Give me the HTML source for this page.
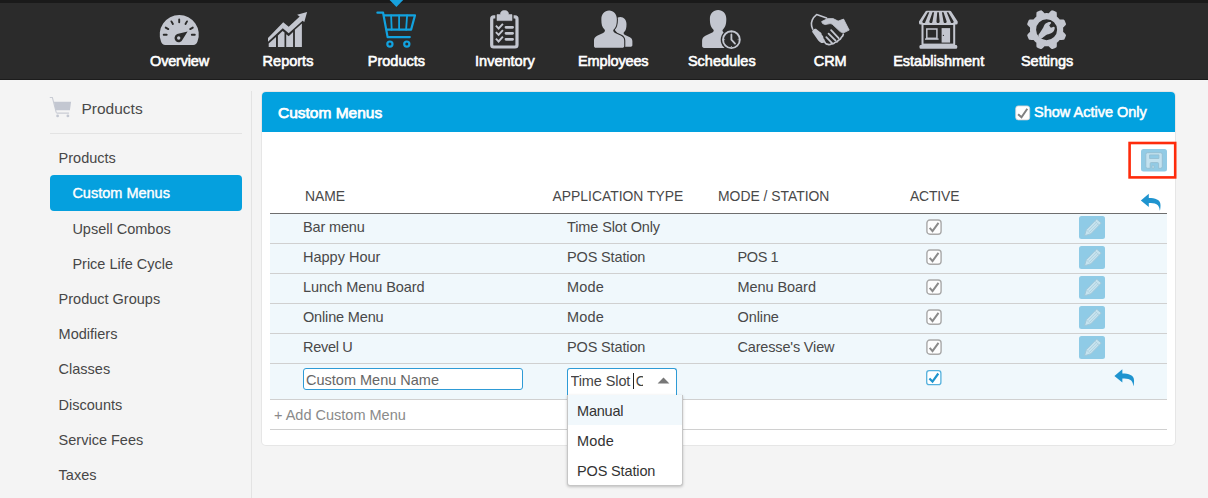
<!DOCTYPE html>
<html><head><meta charset="utf-8">
<style>
*{box-sizing:border-box;margin:0;padding:0}
html,body{width:1208px;height:498px;overflow:hidden;background:#f4f4f4;font-family:"Liberation Sans",sans-serif;color:#444}
#nav{position:absolute;left:0;top:0;width:1208px;height:80px;background:#2b2b2b}
#nav .strip{position:absolute;left:0;top:0;width:1208px;height:3px;background:#1a1a1a}
#nav .bl{position:absolute;left:0;top:79px;width:1208px;height:1px;background:#1c1c1c}
.ni{position:absolute;top:0;width:140px;height:80px;color:#fff}
.ni span{position:absolute;left:0;width:140px;text-align:center;top:52px;font-size:14.5px;line-height:18px;-webkit-text-stroke:0.6px #fff;white-space:nowrap}
.ni svg{position:absolute;overflow:visible}
#tri{position:absolute;left:385px;top:0;width:0;height:0;border-left:11px solid transparent;border-right:11px solid transparent;border-top:8px solid #17a1dd}
#side{position:absolute;left:0;top:91px;width:252px;height:407px;background:#f4f4f4;border-right:1px solid #e3e3e3}
#side .hd{position:absolute;left:81px;top:100px;font-size:15.5px;line-height:18px;color:#444}
#side .dv{position:absolute;left:50px;top:133px;width:192px;height:1px;background:#e3e3e3}
.si{position:absolute;left:58.6px;font-size:14.5px;line-height:18px;color:#474747;white-space:nowrap}
.si.sub{left:72.4px}
.si.on{color:#fff;-webkit-text-stroke:0.4px #fff}
#act{position:absolute;left:50px;top:175px;width:192px;height:35.5px;background:#05a0de;border-radius:4px}
#panel{position:absolute;left:262px;top:92px;width:913px;height:353px;background:#fff;border-radius:4px;box-shadow:0 0 0 1px #e6e6e6}
#ph{position:absolute;left:262px;top:92px;width:913px;height:40px;background:#02a1df;border-radius:4px 4px 0 0;color:#fff}
#ph .t{position:absolute;left:16px;top:12px;font-size:15.5px;line-height:18px;-webkit-text-stroke:0.75px #fff;white-space:nowrap}
#ph .sa{position:absolute;left:772px;top:11px;font-size:14.5px;line-height:18px;-webkit-text-stroke:0.55px #fff;white-space:nowrap}
.th{position:absolute;top:187px;font-size:13.9px;line-height:18px;color:#494949;white-space:nowrap}
.hl{position:absolute;left:270px;width:897px;height:1px;background:#d0d0d0}
.row{position:absolute;left:270px;width:897px;background:#f0f8fc}
.td{position:absolute;font-size:14.5px;line-height:18px;color:#494949;white-space:nowrap}
.cb{position:absolute;width:15px;height:15px;border:1px solid #b3b3b3;border-radius:3px;background:linear-gradient(#fff,#f1f1f1)}
.cb svg{position:absolute;left:0;top:0}
.eb{position:absolute;left:1079px;width:26px;height:23px;border-radius:3px;background:#8ecbe7}
.eb svg{position:absolute;left:0;top:0}
</style></head><body>
<div id="nav"><div class="strip"></div><div class="bl"></div>
<div class="ni" style="left:109.5px"><span style="letter-spacing:-0.2px">Overview</span></div>
<div class="ni" style="left:218px"><span>Reports</span></div>
<div class="ni" style="left:326.4px"><span>Products</span></div>
<div class="ni" style="left:434.9px"><span>Inventory</span></div>
<div class="ni" style="left:543.3px"><span style="letter-spacing:-0.15px">Employees</span></div>
<div class="ni" style="left:651.8px"><span>Schedules</span></div>
<div class="ni" style="left:760.2px"><span>CRM</span></div>
<div class="ni" style="left:868.7px"><span>Establishment</span></div>
<div class="ni" style="left:977.1px"><span>Settings</span></div>
<svg id="icons" width="1208" height="80" viewBox="0 0 1208 80" style="position:absolute;left:0;top:0" fill="#c3c6cf">
<!-- triangle -->
<path d="M389.6 0H403.2L396.4 6.9Z" fill="#17a1dd"/>
<!-- overview gauge -->
<g>
<path d="M161 41.500A19.550 19.550 0 1 1 197.500 41.500Q196.400 44.900 193.300 44.900H165.200Q162.100 44.900 161 41.500Z"/>
<g stroke="#2b2b2b" stroke-width="1.900" stroke-linecap="round" fill="none">
<path d="M163.7 34.7H166.7M165.7 27.6L168.3 29.1M171.4 21.4L172.9 24M179.2 19.5V22.3M187 21.4L185.5 24M192.8 27.6L190.2 29.1M191.8 34.7H194.8"/>
</g>
<path d="M187.6 31.5L182.6 39.6A4.2 4.2 0 1 1 177.2 34.1Z" fill="#2b2b2b"/>
<circle cx="178.7" cy="38" r="1.7"/>
</g>
<!-- reports -->
<g>
<path d="M268 38L283.2 22.3L288.7 26.7L299.7 16.4L297.1 14.8L307.1 12L304.3 21.9L302.6 20.7L288.7 33.3L282.8 28.3L268 41.8Z"/>
<path d="M268.7 43.4L276 37.1V47H268.7Z"/>
<path d="M277.9 35.4L282.6 31L284.5 32.5V47H277.9Z"/>
<path d="M286.2 34.2L288.7 36.3L293.1 32.1V47H286.2Z"/>
<path d="M294.9 29.7L301.9 23.6V47H294.9Z"/>
</g>
<!-- products cart -->
<g fill="none" stroke="#12a2df" stroke-width="2.200" stroke-linecap="round" stroke-linejoin="round">
<path d="M377.4 12.7H383.1L387.6 37.1H409.8"/>
<path d="M384.2 15.3H415L411.1 29.6H386.7"/>
<path d="M391.1 15.3L391.7 29.6M399.1 15.3V29.6M407.1 15.3L406.1 29.6" stroke-width="1.8"/>
<circle cx="389.9" cy="44.1" r="2.6"/><circle cx="406.8" cy="44.1" r="2.6"/>
</g>
<!-- inventory -->
<g>
<path d="M495.3 16.9H493.7a2 2 0 0 0-2 2V45a2 2 0 0 0 2 2H515a2 2 0 0 0 2-2V18.9a2 2 0 0 0-2-2H513.6" fill="none" stroke="#c3c6cf" stroke-width="3.2"/>
<path d="M497 14.6H500.4a4.1 4.1 0 0 1 8.2 0H512V20.6H497Z" stroke="#c3c6cf" stroke-width="0.6" stroke-linejoin="round"/>
<g fill="none" stroke="#c3c6cf" stroke-width="1.9">
<path d="M495.9 25.7L498.6 28.5L502.9 23.9M495.9 32.2L498.6 34.9L502.9 30.1M495.9 38.6L498.6 41.5L502.9 36.6"/>
</g>
<g fill="none" stroke="#c3c6cf" stroke-width="2.8" stroke-linecap="round">
<path d="M506 27.3H512.6M506 33.3H512.6M506 39.3H512.6"/>
</g>
</g>
<!-- employees -->
<g>
<path d="M0 0C4.6 0 7.75 3.6 7.75 8.7C7.75 13.8 7 16.6 4.8 18.8C4.1 19.6 4 20.2 4.3 20.8C4.6 21.6 5.2 22 6 22.4L12 25.3C14 26.3 15.1 28 15.1 30.2V35.4C15.1 36.5 14.3 37.2 13.2 37.2H-13.2C-14.3 37.2-15.1 36.5-15.1 35.4V30.2C-15.1 28-14 26.300-12 25.300L-6 22.400C-5.200 22-4.600 21.600-4.300 20.800C-4 20-4.100 19.600-4.800 18.800C-7 16.600-7.750 13.800-7.750 8.700C-7.750 3.600-4.600 0 0 0Z" transform="translate(620.3 17) scale(0.8)"/>
<path d="M0 0C4.6 0 7.75 3.6 7.75 8.7C7.75 13.8 7 16.6 4.8 18.8C4.1 19.6 4 20.2 4.3 20.8C4.6 21.6 5.2 22 6 22.4L12 25.3C14 26.3 15.1 28 15.1 30.2V35.4C15.1 36.5 14.3 37.2 13.2 37.2H-13.2C-14.3 37.2-15.1 36.5-15.1 35.4V30.2C-15.1 28-14 26.300-12 25.300L-6 22.400C-5.200 22-4.600 21.600-4.300 20.800C-4 20-4.100 19.600-4.800 18.800C-7 16.600-7.750 13.800-7.750 8.700C-7.750 3.600-4.600 0 0 0Z" transform="translate(609.1 10.5)" stroke="#2b2b2b" stroke-width="2.2"/>
<path d="M0 0C4.6 0 7.75 3.6 7.75 8.7C7.75 13.8 7 16.6 4.8 18.8C4.1 19.6 4 20.2 4.3 20.8C4.6 21.6 5.2 22 6 22.4L12 25.3C14 26.3 15.1 28 15.1 30.2V35.4C15.1 36.5 14.3 37.2 13.2 37.2H-13.2C-14.3 37.2-15.1 36.5-15.1 35.4V30.2C-15.1 28-14 26.300-12 25.300L-6 22.400C-5.200 22-4.600 21.600-4.300 20.800C-4 20-4.100 19.600-4.800 18.800C-7 16.600-7.750 13.800-7.750 8.700C-7.750 3.600-4.600 0 0 0Z" transform="translate(609.1 10.5)"/>
</g>
<!-- schedules -->
<g>
<path d="M0 0C4.6 0 7.75 3.6 7.75 8.7C7.75 13.8 7 16.6 4.8 18.8C4.1 19.6 4 20.2 4.3 20.8C4.6 21.6 5.2 22 6 22.4L12 25.3C14 26.3 15.1 28 15.1 30.2V35.4C15.1 36.5 14.3 37.2 13.2 37.2H-13.2C-14.3 37.2-15.1 36.5-15.1 35.4V30.2C-15.1 28-14 26.300-12 25.300L-6 22.400C-5.200 22-4.600 21.600-4.300 20.800C-4 20-4.100 19.600-4.800 18.800C-7 16.600-7.750 13.800-7.750 8.700C-7.750 3.600-4.600 0 0 0Z" transform="translate(718.1 10) scale(1.06 1.02)"/>
<circle cx="731.4" cy="39.7" r="10.7" fill="#2b2b2b"/>
<circle cx="731.4" cy="39.700" r="8.400" fill="none" stroke="#c3c6cf" stroke-width="1.900"/>
<path d="M731.400 34.600V39.700L735 43.600" fill="none" stroke="#c3c6cf" stroke-width="1.800" stroke-linecap="round"/>
<path d="M731.400 32.400v1M731.400 46v1M724.100 39.700h1M737.700 39.700h1" stroke="#c3c6cf" stroke-width="0.800" fill="none"/>
</g>
<!-- crm -->
<g>
<path d="M821.600 21.600L827.600 18.600H833.100L838.100 21.100L843.600 19.100L849.200 30.100L843.100 33.100L840.100 31.600L832.100 24.100L830.100 23.600L825.100 24.600L822.600 23.600Z" stroke="#c3c6cf" stroke-width="0.800" stroke-linejoin="round"/>
<path d="M826.600 18.100L816.600 14.600C812.600 17.600 810.600 22.600 811.600 26.100L812.600 29.100" fill="none" stroke="#c3c6cf" stroke-width="1.600" stroke-linecap="round" stroke-linejoin="round"/>
<path d="M812.900 29.900C813.900 28.900 815.600 28.500 816.600 29.200L820 32C821.300 32.500 821.900 33.600 821.700 34.800C822.900 35.500 823.600 36.900 823.400 38.300C824.500 39.100 825 40.300 824.700 41.400C824.200 42.800 822.700 43.400 821.300 42.900C819.900 42.400 818.900 41.600 818.200 40.600L812.600 32.600C812 31.700 812.100 30.700 812.900 29.900Z"/>
<path d="M831.100 30.100L838.600 38.100M828.600 33.600L835.600 40.600M826.300 37.100L832.100 43.100" fill="none" stroke="#c3c6cf" stroke-width="1.800" stroke-linecap="round"/>
<path d="M824.300 41.300C825 43.300 826.600 44.400 828.100 44.400C829.100 44.800 830.400 44.600 831.300 43.800C832.700 44.100 834.100 43.600 834.900 42.500C836.600 42.300 837.900 41.500 838.500 40.200C840 39.600 840.900 38.600 841.300 37.400C842.400 36.600 843.100 35.600 843.300 34.400" fill="none" stroke="#c3c6cf" stroke-width="1.700" stroke-linecap="round" stroke-linejoin="round"/>
</g>
<!-- establishment -->
<g>

<path d="M926.8 10.7H949.8a1.5 1.5 0 0 1 1.2 0.6L957.7 21.4V23a1.6 1.6 0 0 1-1.6 1.6H920.6A1.6 1.6 0 0 1 919 23V21.4L925.6 11.3a1.5 1.5 0 0 1 1.2-0.6Z"/>
<path d="M927.70 12.2L929.30 12.2L925.50 21.6A1.6 1.6 0 0 1 922.30 21.6ZM932.50 12.2L934.10 12.2L932.50 21.6A1.6 1.6 0 0 1 929.30 21.6ZM937.25 12.2L938.85 12.2L939.65 21.6A1.6 1.6 0 0 1 936.45 21.6ZM941.90 12.2L943.50 12.2L946.70 21.6A1.6 1.6 0 0 1 943.50 21.6ZM946.70 12.2L948.30 12.2L953.70 21.6A1.6 1.6 0 0 1 950.50 21.6Z" fill="#2b2b2b"/>
<rect x="922.500" y="24" width="31.700" height="20.600" fill="none" stroke="#c3c6cf" stroke-width="2"/>
<rect x="919.500" y="45.100" width="37.700" height="3.600" rx="1.200"/>
<rect x="926.800" y="29" width="10.100" height="9.300" fill="none" stroke="#c3c6cf" stroke-width="1.500"/>
<rect x="925" y="38.400" width="13.600" height="1.400"/>
<rect x="941.600" y="28.100" width="8.500" height="14.500"/>
<circle cx="943.400" cy="35.400" r="0.600" fill="#2b2b2b"/>
</g>
<!-- settings -->
<g id="gear"><path fill-rule="evenodd" d="M1063.20 29.70L1063.20 29.41L1063.19 29.12L1063.18 28.83L1063.16 28.54L1063.14 28.25L1063.11 27.96L1063.08 27.68L1063.41 27.34L1063.78 26.98L1064.17 26.60L1064.55 26.21L1064.93 25.80L1065.29 25.38L1065.63 24.96L1065.94 24.52L1066.02 24.13L1065.92 23.79L1065.81 23.46L1065.70 23.12L1065.58 22.79L1065.46 22.46L1065.33 22.13L1065.19 21.81L1065.05 21.48L1064.91 21.16L1064.76 20.84L1064.60 20.53L1064.44 20.22L1064.27 19.91L1063.94 19.69L1063.41 19.60L1062.87 19.53L1062.32 19.49L1061.76 19.47L1061.21 19.47L1060.68 19.47L1060.16 19.48L1059.68 19.48L1059.50 19.25L1059.32 19.03L1059.13 18.81L1058.94 18.59L1058.74 18.38L1058.54 18.17L1058.34 17.96L1058.13 17.76L1057.92 17.56L1057.71 17.36L1057.49 17.17L1057.27 16.98L1057.05 16.80L1056.82 16.62L1056.82 16.14L1056.83 15.62L1056.83 15.09L1056.83 14.54L1056.81 13.98L1056.77 13.43L1056.70 12.89L1056.61 12.36L1056.39 12.03L1056.08 11.86L1055.77 11.70L1055.46 11.54L1055.14 11.39L1054.82 11.25L1054.49 11.11L1054.17 10.97L1053.84 10.84L1053.51 10.72L1053.18 10.60L1052.84 10.49L1052.51 10.38L1052.17 10.28L1051.78 10.36L1051.34 10.67L1050.92 11.01L1050.50 11.37L1050.09 11.75L1049.70 12.13L1049.32 12.52L1048.96 12.89L1048.62 13.22L1048.34 13.19L1048.05 13.16L1047.76 13.14L1047.47 13.12L1047.18 13.11L1046.89 13.10L1046.60 13.10L1046.31 13.10L1046.02 13.11L1045.73 13.12L1045.44 13.14L1045.15 13.16L1044.86 13.19L1044.58 13.22L1044.24 12.89L1043.88 12.52L1043.50 12.13L1043.11 11.75L1042.70 11.37L1042.28 11.01L1041.86 10.67L1041.42 10.36L1041.03 10.28L1040.69 10.38L1040.36 10.49L1040.02 10.60L1039.69 10.72L1039.36 10.84L1039.03 10.97L1038.71 11.11L1038.38 11.25L1038.06 11.39L1037.74 11.54L1037.43 11.70L1037.12 11.86L1036.81 12.03L1036.59 12.36L1036.50 12.89L1036.43 13.43L1036.39 13.98L1036.37 14.54L1036.37 15.09L1036.37 15.62L1036.38 16.14L1036.38 16.62L1036.15 16.80L1035.93 16.98L1035.71 17.17L1035.49 17.36L1035.28 17.56L1035.07 17.76L1034.86 17.96L1034.66 18.17L1034.46 18.38L1034.26 18.59L1034.07 18.81L1033.88 19.03L1033.70 19.25L1033.52 19.48L1033.04 19.48L1032.52 19.47L1031.99 19.47L1031.44 19.47L1030.88 19.49L1030.33 19.53L1029.79 19.60L1029.26 19.69L1028.93 19.91L1028.76 20.22L1028.60 20.53L1028.44 20.84L1028.29 21.16L1028.15 21.48L1028.01 21.81L1027.87 22.13L1027.74 22.46L1027.62 22.79L1027.50 23.12L1027.39 23.46L1027.28 23.79L1027.18 24.13L1027.26 24.52L1027.57 24.96L1027.91 25.38L1028.27 25.80L1028.65 26.21L1029.03 26.60L1029.42 26.98L1029.79 27.34L1030.12 27.68L1030.09 27.96L1030.06 28.25L1030.04 28.54L1030.02 28.83L1030.01 29.12L1030.00 29.41L1030.00 29.70L1030.00 29.99L1030.01 30.28L1030.02 30.57L1030.04 30.86L1030.06 31.15L1030.09 31.44L1030.12 31.72L1029.79 32.06L1029.42 32.42L1029.03 32.80L1028.65 33.19L1028.27 33.60L1027.91 34.02L1027.57 34.44L1027.26 34.88L1027.18 35.27L1027.28 35.61L1027.39 35.94L1027.50 36.28L1027.62 36.61L1027.74 36.94L1027.87 37.27L1028.01 37.59L1028.15 37.92L1028.29 38.24L1028.44 38.56L1028.60 38.87L1028.76 39.18L1028.93 39.49L1029.26 39.71L1029.79 39.80L1030.33 39.87L1030.88 39.91L1031.44 39.93L1031.99 39.93L1032.52 39.93L1033.04 39.92L1033.52 39.92L1033.70 40.15L1033.88 40.37L1034.07 40.59L1034.26 40.81L1034.46 41.02L1034.66 41.23L1034.86 41.44L1035.07 41.64L1035.28 41.84L1035.49 42.04L1035.71 42.23L1035.93 42.42L1036.15 42.60L1036.38 42.78L1036.38 43.26L1036.37 43.78L1036.37 44.31L1036.37 44.86L1036.39 45.42L1036.43 45.97L1036.50 46.51L1036.59 47.04L1036.81 47.37L1037.12 47.54L1037.43 47.70L1037.74 47.86L1038.06 48.01L1038.38 48.15L1038.71 48.29L1039.03 48.43L1039.36 48.56L1039.69 48.68L1040.02 48.80L1040.36 48.91L1040.69 49.02L1041.03 49.12L1041.42 49.04L1041.86 48.73L1042.28 48.39L1042.70 48.03L1043.11 47.65L1043.50 47.27L1043.88 46.88L1044.24 46.51L1044.58 46.18L1044.86 46.21L1045.15 46.24L1045.44 46.26L1045.73 46.28L1046.02 46.29L1046.31 46.30L1046.60 46.30L1046.89 46.30L1047.18 46.29L1047.47 46.28L1047.76 46.26L1048.05 46.24L1048.34 46.21L1048.62 46.18L1048.96 46.51L1049.32 46.88L1049.70 47.27L1050.09 47.65L1050.50 48.03L1050.92 48.39L1051.34 48.73L1051.78 49.04L1052.17 49.12L1052.51 49.02L1052.84 48.91L1053.18 48.80L1053.51 48.68L1053.84 48.56L1054.17 48.43L1054.49 48.29L1054.82 48.15L1055.14 48.01L1055.46 47.86L1055.77 47.70L1056.08 47.54L1056.39 47.37L1056.61 47.04L1056.70 46.51L1056.77 45.97L1056.81 45.42L1056.83 44.86L1056.83 44.31L1056.83 43.78L1056.82 43.26L1056.82 42.78L1057.05 42.60L1057.27 42.42L1057.49 42.23L1057.71 42.04L1057.92 41.84L1058.13 41.64L1058.34 41.44L1058.54 41.23L1058.74 41.02L1058.94 40.81L1059.13 40.59L1059.32 40.37L1059.50 40.15L1059.68 39.92L1060.16 39.92L1060.68 39.93L1061.21 39.93L1061.76 39.93L1062.32 39.91L1062.87 39.87L1063.41 39.80L1063.94 39.71L1064.27 39.49L1064.44 39.18L1064.60 38.87L1064.76 38.56L1064.91 38.24L1065.05 37.92L1065.19 37.59L1065.33 37.27L1065.46 36.94L1065.58 36.61L1065.70 36.28L1065.81 35.94L1065.92 35.61L1066.02 35.27L1065.94 34.88L1065.63 34.44L1065.29 34.02L1064.93 33.60L1064.55 33.19L1064.17 32.80L1063.78 32.42L1063.41 32.06L1063.08 31.72L1063.11 31.44L1063.14 31.15L1063.16 30.86L1063.18 30.57L1063.19 30.28L1063.20 29.99L1063.20 29.70ZM1036.10 29.70a10.5 10.5 0 1 0 21 0a10.5 10.5 0 1 0 -21 0Z"/><path d="M1038.800 34.300C1040.600 31.800 1042.400 29.300 1043.400 27.300C1044.200 25.700 1044.500 24.500 1045.600 23.600C1046.800 22.600 1048.400 22 1049.700 22C1050.600 22 1051.300 22.400 1051.200 23.100L1049.200 25.600L1050.900 27.800L1053.700 26.700C1054.600 26.600 1054.800 27.400 1054.700 28.200C1054.500 29.900 1053.700 31.500 1052.300 32.500C1050.800 33.600 1048.800 33.900 1047.100 34.600C1045.300 35.400 1043.900 37 1042.400 38.100C1041.500 38.800 1040.200 38.600 1039.300 37.700C1038.300 36.700 1038.100 35.300 1038.800 34.300Z"/></g>
</svg>
</div>
<div id="side"></div>
<div id="act"></div>
<div style="position:absolute;left:50px;top:133px;width:192px;height:1px;background:#e3e3e3"></div>
<div class="td" style="left:81.5px;top:100px;font-size:15.5px">Products</div>
<div class="si" style="top:149px">Products</div>
<div class="si sub on" style="top:184px">Custom Menus</div>
<div class="si sub" style="top:220px">Upsell Combos</div>
<div class="si sub" style="top:255px">Price Life Cycle</div>
<div class="si" style="top:290px">Product Groups</div>
<div class="si" style="top:325px">Modifiers</div>
<div class="si" style="top:360px">Classes</div>
<div class="si" style="top:396px">Discounts</div>
<div class="si" style="top:431px">Service Fees</div>
<div class="si" style="top:466px">Taxes</div>
<svg width="30" height="26" viewBox="48 94 30 26" style="position:absolute;left:48px;top:94px">
<path d="M50.200 97.500H52.400L56.200 112.400Q56.400 113.100 57.200 113.100H68.600" fill="none" stroke="#c9ccd4" stroke-width="1.100" stroke-linecap="round"/>
<path d="M53.900 101.800H71.100L69.900 110.200H55.500Z" fill="#c3c7d1"/>
<circle cx="57.600" cy="115.900" r="1.400" fill="#c3c7d1"/><circle cx="67.900" cy="115.900" r="1.400" fill="#c3c7d1"/>
</svg>
<div id="panel"></div>
<div id="ph"><div class="t">Custom Menus</div><div class="sa">Show Active Only</div></div>
<div class="th" style="left:305px">NAME</div>
<div class="th" style="left:552.5px">APPLICATION TYPE</div>
<div class="th" style="left:718px">MODE / STATION</div>
<div class="th" style="left:910px;letter-spacing:-0.15px">ACTIVE</div>
<div class="row" style="top:214px;height:216px;background:#f0f8fc"></div>
<div class="row" style="top:400px;height:29px;background:#fff"></div>
<div class="hl" style="top:213px;background:#6e6e6e"></div>
<div class="hl" style="top:243px"></div>
<div class="hl" style="top:273px"></div>
<div class="hl" style="top:303px"></div>
<div class="hl" style="top:333px"></div>
<div class="hl" style="top:363px"></div>
<div class="hl" style="top:399px"></div>
<div class="hl" style="top:429px"></div>
<div class="td" style="left:303px;top:218px;letter-spacing:-0.15px">Bar menu</div>
<div class="td" style="left:303px;top:248px">Happy Hour</div>
<div class="td" style="left:303px;top:278px;letter-spacing:-0.06px">Lunch Menu Board</div>
<div class="td" style="left:303px;top:308px;letter-spacing:-0.16px">Online Menu</div>
<div class="td" style="left:303px;top:338px;letter-spacing:-0.3px">Revel U</div>
<div class="td" style="left:567px;top:218px;letter-spacing:-0.11px">Time Slot Only</div>
<div class="td" style="left:567px;top:248px;letter-spacing:-0.14px">POS Station</div>
<div class="td" style="left:567px;top:278px;letter-spacing:0.15px">Mode</div>
<div class="td" style="left:567px;top:308px;letter-spacing:0.15px">Mode</div>
<div class="td" style="left:567px;top:338px;letter-spacing:-0.14px">POS Station</div>
<div class="td" style="left:737.5px;top:248px;letter-spacing:-0.4px">POS 1</div>
<div class="td" style="left:737.5px;top:278px;letter-spacing:-0.06px">Menu Board</div>
<div class="td" style="left:737.5px;top:308px;letter-spacing:-0.1px">Online</div>
<div class="td" style="left:737.5px;top:338px;letter-spacing:-0.17px">Caresse's View</div>
<div class="td" style="left:274px;top:406px;color:#8a8a8a">+ Add Custom Menu</div>
<svg width="1208" height="498" viewBox="0 0 1208 498" style="position:absolute;left:0;top:0;pointer-events:none">
<g transform="translate(926.5 219.600)"><rect x="0.4" y="0.4" width="14.2" height="14.2" rx="3" fill="#fdfdfd" stroke="#a9a9a9" stroke-width="1.4"/><path d="M3.2 8.3L6 11.5L12 3.200" fill="none" stroke="#8a8a8a" stroke-width="2"/></g>
<g transform="translate(926.5 249.600)"><rect x="0.4" y="0.4" width="14.2" height="14.2" rx="3" fill="#fdfdfd" stroke="#a9a9a9" stroke-width="1.4"/><path d="M3.2 8.3L6 11.5L12 3.200" fill="none" stroke="#8a8a8a" stroke-width="2"/></g>
<g transform="translate(926.5 279.600)"><rect x="0.4" y="0.4" width="14.2" height="14.2" rx="3" fill="#fdfdfd" stroke="#a9a9a9" stroke-width="1.4"/><path d="M3.2 8.3L6 11.5L12 3.200" fill="none" stroke="#8a8a8a" stroke-width="2"/></g>
<g transform="translate(926.5 309.600)"><rect x="0.4" y="0.4" width="14.2" height="14.2" rx="3" fill="#fdfdfd" stroke="#a9a9a9" stroke-width="1.4"/><path d="M3.2 8.3L6 11.5L12 3.200" fill="none" stroke="#8a8a8a" stroke-width="2"/></g>
<g transform="translate(926.5 339.600)"><rect x="0.4" y="0.4" width="14.2" height="14.2" rx="3" fill="#fdfdfd" stroke="#a9a9a9" stroke-width="1.4"/><path d="M3.2 8.3L6 11.5L12 3.200" fill="none" stroke="#8a8a8a" stroke-width="2"/></g>
<g transform="translate(1079 216)"><rect width="26" height="23" rx="2.5" fill="#8fcbe6"/>
<path d="M5.6 19.700L7.300 13.700L17.700 3.100L22.300 7L11.700 17.900Z" fill="#c6e3ef" stroke="#9fc5d7" stroke-width="0.900" stroke-linejoin="round"/>
<path d="M7.300 13.900L11.500 17.700M16 5.300L20.200 9.100M9.500 14.500L17.800 6.100M11 16L19.200 7.700" fill="none" stroke="#a6c9d9" stroke-width="0.600"/></g>
<g transform="translate(1079 246)"><rect width="26" height="23" rx="2.5" fill="#8fcbe6"/>
<path d="M5.6 19.700L7.300 13.700L17.700 3.100L22.300 7L11.700 17.900Z" fill="#c6e3ef" stroke="#9fc5d7" stroke-width="0.900" stroke-linejoin="round"/>
<path d="M7.300 13.900L11.500 17.700M16 5.300L20.200 9.100M9.500 14.500L17.800 6.100M11 16L19.200 7.700" fill="none" stroke="#a6c9d9" stroke-width="0.600"/></g>
<g transform="translate(1079 276)"><rect width="26" height="23" rx="2.5" fill="#8fcbe6"/>
<path d="M5.6 19.700L7.300 13.700L17.700 3.100L22.300 7L11.700 17.900Z" fill="#c6e3ef" stroke="#9fc5d7" stroke-width="0.900" stroke-linejoin="round"/>
<path d="M7.300 13.900L11.500 17.700M16 5.300L20.200 9.100M9.500 14.500L17.800 6.100M11 16L19.200 7.700" fill="none" stroke="#a6c9d9" stroke-width="0.600"/></g>
<g transform="translate(1079 306)"><rect width="26" height="23" rx="2.5" fill="#8fcbe6"/>
<path d="M5.6 19.700L7.300 13.700L17.700 3.100L22.300 7L11.700 17.900Z" fill="#c6e3ef" stroke="#9fc5d7" stroke-width="0.900" stroke-linejoin="round"/>
<path d="M7.300 13.900L11.500 17.700M16 5.300L20.200 9.100M9.500 14.500L17.800 6.100M11 16L19.200 7.700" fill="none" stroke="#a6c9d9" stroke-width="0.600"/></g>
<g transform="translate(1079 336)"><rect width="26" height="23" rx="2.5" fill="#8fcbe6"/>
<path d="M5.6 19.700L7.300 13.700L17.700 3.100L22.300 7L11.700 17.900Z" fill="#c6e3ef" stroke="#9fc5d7" stroke-width="0.900" stroke-linejoin="round"/>
<path d="M7.300 13.900L11.500 17.700M16 5.300L20.200 9.100M9.500 14.500L17.800 6.100M11 16L19.200 7.700" fill="none" stroke="#a6c9d9" stroke-width="0.600"/></g>
<g transform="translate(1140.850 193.700)"><path d="M0 6.800L7.950 0V4.300C14.150 4.300 19.650 5.800 19.650 11.300C19.650 13.800 19.450 15.800 18.950 17.100C18.650 13.800 17.750 11.800 15.650 10.500C13.650 9.300 10.650 9.200 7.950 9.200V13.300Z" fill="#1f94cf"/></g>
<g transform="translate(1114.400 369.200)"><path d="M0 6.800L7.950 0V4.300C14.150 4.300 19.650 5.800 19.650 11.300C19.650 13.800 19.450 15.800 18.950 17.100C18.650 13.800 17.750 11.800 15.650 10.500C13.650 9.300 10.650 9.200 7.950 9.200V13.300Z" fill="#1f94cf"/></g>
<!-- show active only checkbox -->
<rect x="1015.700" y="105.900" width="14" height="14" rx="2.500" fill="#fff" stroke="#d8cfcf" stroke-width="0.800"/>
<path d="M1018.100 114.200L1021.500 117.300L1027.300 108.700" fill="none" stroke="#808080" stroke-width="2"/>
<!-- blue checkbox -->
<rect x="926.700" y="370.700" width="14.200" height="14" rx="2.500" fill="#fff" stroke="#55b1dd" stroke-width="1.300"/>
<path d="M929.400 378.500L932.500 381.600L938.300 373.500" fill="none" stroke="#1e94cd" stroke-width="2.200"/>
<!-- save button -->
<rect x="1141" y="149" width="26" height="22.500" rx="2.500" fill="#92cbe5"/>
<g id="floppy" fill="#c4e2ef" stroke="#95bed1" stroke-width="0.900" stroke-linejoin="round">
<path fill-rule="evenodd" d="M1147.600 152.700H1160.500a1.800 1.800 0 0 1 1.800 1.800V166.500a1.800 1.800 0 0 1-1.800 1.800H1158.600V163.600a1 1 0 0 0-1-1H1151.200a1 1 0 0 0-1 1V168.300H1147.600a1.800 1.800 0 0 1-1.800-1.800V154.500a1.800 1.800 0 0 1 1.800-1.800ZM1149.600 154.900V158.500H1158.900V154.900Z"/>
<rect x="1152.100" y="165.400" width="1.900" height="2.900" rx="0.500"/>
</g>
<!-- red box -->
<rect x="1129.600" y="143" width="45.600" height="34.400" fill="none" stroke="#fe2b0b" stroke-width="2.600"/>
</svg>
<!-- input -->
<div style="position:absolute;left:303px;top:368px;width:220px;height:22px;border:1px solid #2e9bd6;border-radius:3px;background:#fff"></div>
<div class="td" style="left:306px;top:371px;color:#666">Custom Menu Name</div>
<!-- select -->
<div style="position:absolute;left:567px;top:368px;width:110px;height:28px;border:1px solid #2e9bd6;border-bottom:none;border-radius:3px 3px 0 0;background:#fff"></div>
<div class="td" style="left:570.5px;top:372px;width:72.800px;overflow:hidden;color:#444"><span style="letter-spacing:-0.100px">Time Slot</span><span style="display:inline-block;width:1px;height:16px;background:#222;vertical-align:-3px;margin:0 1.500px 0 3px"></span>Only</div>
<svg width="14" height="8" style="position:absolute;left:657px;top:376.600px"><path d="M0.600 6.400L6.500 0.400L12.400 6.400Z" fill="#777"/></svg>
<!-- dropdown -->
<div style="position:absolute;left:567px;top:394.500px;width:116px;height:91px;border:1px solid #c6c6c6;border-top:none;border-radius:0 0 3px 3px;background:#fff;box-shadow:0 1px 3px rgba(0,0,0,0.22)"></div>
<div style="position:absolute;left:568px;top:394.500px;width:114px;height:30px;background:#f1f8fc"></div>
<div class="td" style="left:577px;top:402px;color:#333;letter-spacing:-0.200px">Manual</div>
<div class="td" style="left:577px;top:432px;color:#333;letter-spacing:0.150px">Mode</div>
<div class="td" style="left:577px;top:462px;color:#333;letter-spacing:-0.140px">POS Station</div>
</body></html>
